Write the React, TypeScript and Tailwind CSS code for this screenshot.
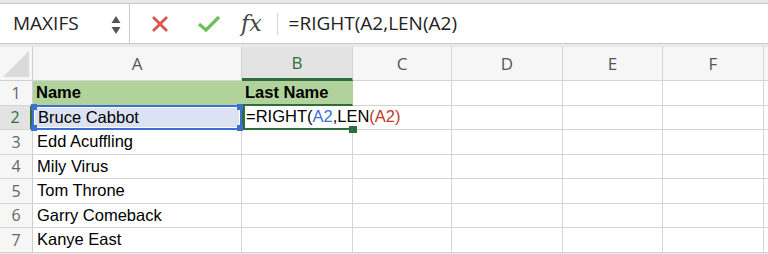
import React from "react";

const cols = ["A", "B", "C", "D", "E", "F", ""];
const names = ["Bruce Cabbot", "Edd Acuffling", "Mily Virus", "Tom Throne", "Garry Comeback", "Kanye East"];

function Corner({ pos }: { pos: string }) {
  return <div className={`absolute w-[6px] h-[6px] bg-[#3d6fd0] ${pos}`} />;
}

export default function App() {
  const font = { fontFamily: '"Open Sans", "Liberation Sans", sans-serif' };
  const cellFont = { fontFamily: '"Liberation Sans", Arial, sans-serif' };
  return (
    <div className="w-[768px] h-[254px] overflow-hidden bg-[#e9e9e9] pt-[3px]" style={font}>
      {/* formula bar */}
      <div className="flex h-[41px] bg-white border-y border-[#c9c9c9]">
        <div className="w-[130px] flex items-center border-r border-[#c9c9c9] pl-[13px] pr-[8px]">
          <span className="text-[19px] text-[#222] flex-1 leading-none">MAXIFS</span>
          <svg width="10" height="24" viewBox="0 0 10 24" className="mt-[2px]">
            <polygon points="5,3 9.5,10 0.5,10" fill="#555" />
            <polygon points="5,21 9.5,14 0.5,14" fill="#555" />
          </svg>
        </div>
        <div className="flex items-center pl-[22px]">
          <svg width="16" height="16" viewBox="0 0 16 16">
            <path d="M2 2 L14 14 M14 2 L2 14" stroke="#d9534f" strokeWidth="2.8" strokeLinecap="square" />
          </svg>
          <svg width="24" height="18" viewBox="0 0 24 18" className="ml-[29px]">
            <path d="M2 9 L9 15 L22 2" stroke="#6bbf5b" strokeWidth="3.2" fill="none" />
          </svg>
          <span className="ml-[20px] text-[22px] italic text-[#444] leading-none" style={{ fontFamily: '"DejaVu Serif", "Liberation Serif", serif' }}>
            fx
          </span>
          <div className="ml-[15px] w-px h-[22px] bg-[#d4d4d4]" />
          <span className="ml-[11px] text-[19px] text-[#222] leading-none">=RIGHT(A2,LEN(A2)</span>
        </div>
      </div>
      <div className="h-[3px]" />
      {/* grid */}
      <div className="grid grid-cols-[33px_209px_111px_99px_111px_100px_101px_40px] grid-rows-[34px_repeat(7,24.5px)] bg-white">
        {/* header row */}
        <div className="relative bg-[#f6f6f6] border-r border-b border-[#cfcfcf]">
          <svg width="26" height="26" viewBox="0 0 26 26" className="absolute right-[3px] bottom-[3px]">
            <polygon points="26,0 26,26 0,26" fill="#dadada" />
          </svg>
        </div>
        {cols.map((c, i) =>
          c === "B" ? (
            <div key={i} className="flex items-center justify-center bg-[#e3e3e3] border-r border-[#d4d4d4] border-b-[3px] border-b-[#2f6d3d] text-[17px] text-[#2f6d3d]">
              {c}
            </div>
          ) : (
            <div key={i} className="flex items-center justify-center bg-[#f6f6f6] border-r border-b border-[#d4d4d4] text-[17px] text-[#555]">
              {c}
            </div>
          )
        )}
        {/* rows */}
        {Array.from({ length: 7 }).map((_, r) => {
          const row = r + 1;
          return (
            <React.Fragment key={row}>
              <div
                className={`flex items-center justify-center border-b border-[#d4d4d4] text-[16px] ${
                  row === 2 ? "bg-[#e3e3e3] text-[#2f6d3d] border-r-[3px] border-r-[#2f6d3d]" : "bg-[#f6f6f6] text-[#666] border-r border-r-[#cfcfcf]"
                }`}
              >
                {row}
              </div>
              {cols.map((c, i) => {
                if (row === 1 && (c === "A" || c === "B")) {
                  return (
                    <div
                      key={i}
                      className={`flex items-center pl-[3px] bg-[#b1d39b] text-[16.5px] font-bold text-black border-r border-[#b1d39b] ${
                        c === "B" ? "border-b-[2px] border-b-[#2f6d3d]" : "border-b border-b-[#d4d4d4]"
                      }`}
                      style={cellFont}
                    >
                      {c === "A" ? "Name" : "Last Name"}
                    </div>
                  );
                }
                if (row === 2 && c === "A") {
                  return (
                    <div key={i} className="relative border-r border-b border-[#d4d4d4]">
                      <div className="absolute inset-[-1px] border-[2px] border-[#3d6fd0] bg-[#dbe2f3] flex items-center pl-[4px] text-[16.5px] text-black z-10" style={cellFont}>
                        <div className="absolute inset-0 border border-white" />
                        <span className="relative">Bruce Cabbot</span>
                        <Corner pos="left-[-3px] top-[-3px]" />
                        <Corner pos="right-[-3px] top-[-3px]" />
                        <Corner pos="left-[-3px] bottom-[-3px]" />
                        <Corner pos="right-[-3px] bottom-[-3px]" />
                      </div>
                    </div>
                  );
                }
                if (row === 2 && c === "B") {
                  return (
                    <div key={i} className="relative border-b-[2px] border-[#2f6d3d] border-l-[3px]">
                      <div className="absolute left-0 top-0 bottom-0 z-20 flex items-center pl-[1px] pr-[2px] bg-white whitespace-nowrap text-[16.5px] text-black" style={cellFont}>
                        =RIGHT(<span className="text-[#3d6fd0]">A2</span>,LEN<span className="text-[#c0392b]">(A2)</span>
                      </div>
                      <div className="absolute right-[-4px] bottom-[-5px] w-[8px] h-[7px] bg-[#2f6d3d] z-30" />
                    </div>
                  );
                }
                if (row >= 2 && c === "A") {
                  return (
                    <div key={i} className="flex items-center pl-[4px] border-r border-b border-[#d4d4d4] text-[16.5px] text-black" style={cellFont}>
                      {names[row - 2]}
                    </div>
                  );
                }
                return <div key={i} className="border-r border-b border-[#d4d4d4]" />;
              })}
            </React.Fragment>
          );
        })}
      </div>
    </div>
  );
}
